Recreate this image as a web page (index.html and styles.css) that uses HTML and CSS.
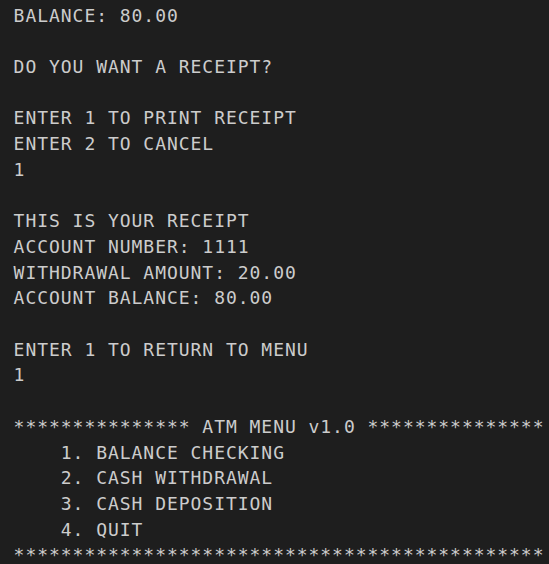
FILE: index.html
```html
<!DOCTYPE html>
<html>
<head>
<meta charset="utf-8">
<link rel="stylesheet" href="styles.css">
</head>
<body>
<pre class="term">BALANCE: 80.00

DO YOU WANT A RECEIPT?

ENTER 1 TO PRINT RECEIPT
ENTER 2 TO CANCEL
1

THIS IS YOUR RECEIPT
ACCOUNT NUMBER: 1111
WITHDRAWAL AMOUNT: 20.00
ACCOUNT BALANCE: 80.00

ENTER 1 TO RETURN TO MENU
1

*************** ATM MENU v1.0 ***************
    1. BALANCE CHECKING
    2. CASH WITHDRAWAL
    3. CASH DEPOSITION
    4. QUIT
*********************************************</pre>
</body>
</html>
```

FILE: styles.css
```css
html, body {
  margin: 0;
  padding: 0;
  background: #1e1e1e;
  width: 549px;
  height: 564px;
  overflow: hidden;
}
.term {
  margin: 0;
  padding: 2.6px 0 0 13.6px;
  font-family: "DejaVu Sans Mono", monospace;
  font-size: 18px;
  letter-spacing: 0.96px;
  line-height: 25.7px;
  color: #cccccc;
  white-space: pre;
}
```
